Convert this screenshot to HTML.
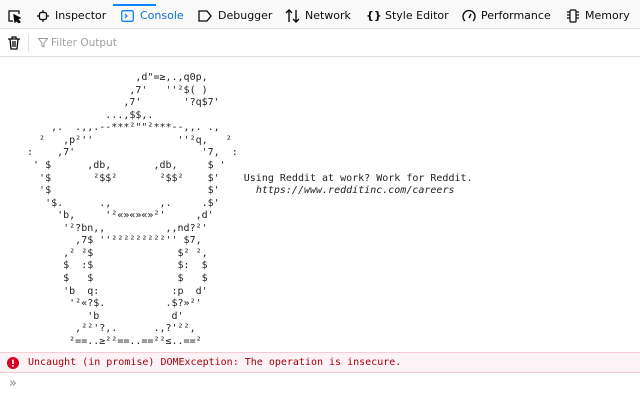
<!DOCTYPE html>
<html><head><meta charset="utf-8"><style>
*{margin:0;padding:0;box-sizing:border-box}
body{width:640px;height:400px;overflow:hidden;background:#fff;font-family:"DejaVu Sans","Liberation Sans",sans-serif;position:relative}
.tb{position:absolute;left:0;top:0;width:640px;height:29px;background:#f9f9fa;border-bottom:1px solid #e0e0e2}
.tab{position:absolute;top:9px;font-size:11px;color:#0c0c0d;white-space:nowrap}
.act{position:absolute;left:113px;top:4px;width:43px;height:2px;background:#0a84ff}
.fb{position:absolute;left:0;top:29px;width:640px;height:28px;border-bottom:1px solid #e0e0e2;background:#fff}
pre{position:absolute;left:21px;top:72px;font-family:"DejaVu Sans Mono","Liberation Mono",monospace;font-size:10px;line-height:12.57px;color:#222}
.err{position:absolute;left:0;top:352px;width:640px;height:21px;background:#fdf2f5;border-top:1px solid #f6cbd6;border-bottom:1px solid #f6cbd6}
.err span{position:absolute;left:28px;top:4px;font-family:"DejaVu Sans Mono",monospace;font-size:10px;color:#a4000f}
svg{position:absolute}
</style></head><body>
<div class="tb">
<svg style="left:7px;top:9px" width="14" height="14" viewBox="0 0 14 14" fill="none" stroke="#0c0c0d" stroke-width="1.3"><path d="M12 5V2H2v10h4"/><path d="M7 6l6 3-2.5 1L13 13l-1 1-2.5-2.5L8 13z" fill="#0c0c0d"/></svg>
<svg style="left:37px;top:10px" width="12" height="12" viewBox="0 0 12 12" fill="none" stroke="#0c0c0d" stroke-width="1.3"><rect x="2.5" y="2.5" width="7" height="7" rx="1.5"/><path d="M6 0v2.5M6 9.5V12M0 6h2.5M9.5 6H12"/></svg>
<div class="tab" style="left:55px">Inspector</div>
<div class="act"></div>
<svg style="left:121px;top:10px" width="13" height="12" viewBox="0 0 13 12" fill="none" stroke="#0a84ff" stroke-width="1.3"><rect x=".7" y=".7" width="11.6" height="10.6" rx="1.5"/><path d="M4 4l2 2-2 2"/></svg>
<div class="tab" style="left:140px;color:#0a6fd6">Console</div>
<svg style="left:198px;top:10px" width="14" height="12" viewBox="0 0 14 12" fill="none" stroke="#0c0c0d" stroke-width="1.3"><path d="M1 1h8l4 5-4 5H1z"/></svg>
<div class="tab" style="left:218px">Debugger</div>
<svg style="left:285px;top:9px" width="15" height="14" viewBox="0 0 15 14" fill="none" stroke="#0c0c0d" stroke-width="1.4"><path d="M4 13V1M1 4l3-3 3 3M11 1v12M8 10l3 3 3-3"/></svg>
<div class="tab" style="left:305px">Network</div>
<div class="tab" style="left:366px;font-weight:bold">{}</div>
<div class="tab" style="left:385px">Style Editor</div>
<svg style="left:462px;top:9px" width="14" height="14" viewBox="0 0 14 14" fill="none" stroke="#0c0c0d" stroke-width="1.4"><path d="M3 12A6 6 0 1 1 11 12"/><path d="M7 9l2-4"/></svg>
<div class="tab" style="left:481px">Performance</div>
<svg style="left:566px;top:9px" width="14" height="14" viewBox="0 0 14 14" fill="none" stroke="#0c0c0d" stroke-width="1.2"><rect x="4" y="1" width="6" height="12" rx="1"/><path d="M1 3h3M1 6h3M1 9h3M10 3h3M10 6h3M10 9h3"/></svg>
<div class="tab" style="left:585px">Memory</div>
</div>
<div class="fb">
<svg style="left:8px;top:7px" width="12" height="14" viewBox="0 0 12 14" fill="none" stroke="#0c0c0d" stroke-width="1.3"><path d="M0 3h12M4 3V1h4v2M2 3l1 10h6l1-10M5 5v6M7 5v6"/></svg>
<div style="position:absolute;left:28px;top:5px;width:1px;height:18px;background:#e0e0e2"></div>
<svg style="left:38px;top:9px" width="10" height="10" viewBox="0 0 10 10" fill="none" stroke="#999" stroke-width="1"><path d="M.5 .5h9L6 5v4L4 8V5z"/></svg>
<div style="position:absolute;left:51px;top:8px;font-size:10.5px;color:#a0a0a5">Filter Output</div>
</div>
<pre>                   ,d"=≥,.,q0p,
                  ,7'   ''²$( )
                 ,7'       '?q$7'
              ...,$$,.
     ,.  .,,.--***²""²***--,,. .,
   ²   ,p²''              ''²q,   ²
 :    ,7'                     '7,  :
  ' $      ,db,       ,db,     $ '
   '$       ²$$²       ²$$²    $'    Using Reddit at work? Work for Reddit.
   '$                          $'      <i>https://www.redditinc.com/careers</i>
    '$.      .,        ,.     .$'
      'b,     '²«»«»«»²'     ,d'
       '²?bn,,          ,,nd?²'
         ,7$ ''²²²²²²²²²'' $7,
       ,² ²$              $² ²,
       $  :$              $:  $
       $   $              $   $
       'b  q:            :p  d'
        '²«?$.          .$?»²'
           'b            d'
         ,²²'?,.      .,?'²²,
        ²==..≥²²==..==²²≤..==²</pre>
<div class="err">
<svg style="left:7px;top:4px" width="12" height="12" viewBox="0 0 12 12"><circle cx="6" cy="6" r="6" fill="#d70022"/><rect x="5.2" y="2.5" width="1.6" height="4.5" fill="#fff"/><rect x="5.2" y="8" width="1.6" height="1.6" fill="#fff"/></svg>
<span>Uncaught (in promise) DOMException: The operation is insecure.</span>
</div>
<div style="position:absolute;left:9px;top:376px;font-size:13px;color:#8a8a8f">»</div>
</body></html>
